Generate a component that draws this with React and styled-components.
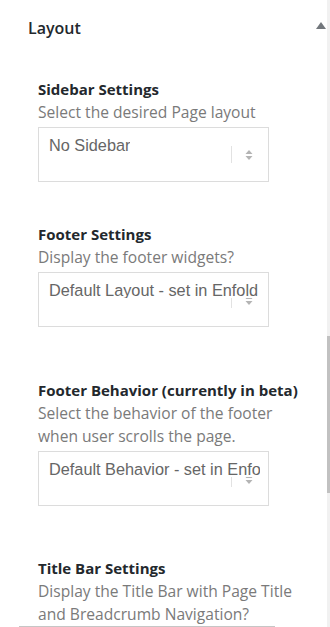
import React from "react";
import styled, { createGlobalStyle } from "styled-components";

const GlobalStyle = createGlobalStyle`
  html, body {
    margin: 0;
    padding: 0;
    background: #fff;
  }
  body {
    font-family: "Open Sans", "Noto Sans", sans-serif;
    color: #23282d;
  }
`;

const Page = styled.div`
  display: flex;
  width: 330px;
  height: 627px;
  overflow: hidden;
  position: relative;
`;

const Main = styled.div`
  flex: 1;
  min-width: 0;
  overflow: hidden;
`;

const Header = styled.div`
  display: flex;
  align-items: center;
  justify-content: space-between;
  padding: 16px 1px 0 28px;
`;

const Title = styled.h2`
  margin: 0;
  font-size: 16px;
  font-weight: 600;
  line-height: 24px;
  color: #23282d;
`;

const Toggle = styled.span`
  width: 0;
  height: 0;
  margin-top: -5px;
  border-left: 5px solid transparent;
  border-right: 5px solid transparent;
  border-bottom: 7px solid #72777c;
`;

const Fields = styled.div`
  display: flex;
  flex-direction: column;
  padding: 0 22px 0 38px;
`;

const Field = styled.div`
  margin-top: ${(p) => p.$space}px;
`;

const Label = styled.div`
  font-size: 15px;
  font-weight: 700;
  line-height: 23px;
  white-space: nowrap;
  color: #23282d;
`;

const Description = styled.div`
  font-size: 15.6px;
  line-height: 23px;
  color: #7a7a7a;
`;

const Select = styled.div`
  position: relative;
  box-sizing: border-box;
  width: 231px;
  height: 55px;
  margin-top: 3px;
  border: 1px solid #dcdcdc;
  background: #fff;
`;

const Value = styled.div`
  position: relative;
  z-index: 1;
  box-sizing: border-box;
  display: inline-block;
  max-width: calc(100% - 18px);
  height: 25px;
  margin-left: 10px;
  padding-top: 9px;
  font-family: "Liberation Sans", Arial, sans-serif;
  font-size: 16.3px;
  line-height: 16px;
  color: #666;
  background: #fff;
  white-space: nowrap;
  overflow: hidden;
  vertical-align: top;
`;

const Indicator = styled.div`
  position: absolute;
  top: 18px;
  right: 15px;
  display: flex;
  align-items: center;
  gap: 13px;
  height: 17px;
`;

const Divider = styled.span`
  width: 1px;
  height: 17px;
  background: #e2e2e2;
`;

const Arrows = styled.svg`
  display: block;
`;

const VTrack = styled.div`
  width: 3px;
  height: 100%;
  display: flex;
  flex-direction: column;
  background: #f1f1f1;
`;

const VThumb = styled.div`
  margin-top: 336px;
  height: 157px;
  background: #c1c1c1;
`;

const HThumb = styled.div`
  position: absolute;
  left: 19px;
  bottom: 0;
  width: 256px;
  height: 1px;
  background: #c6c6c6;
`;

const SelectBox = ({ value }) => (
  <Select>
    <Value>{value}</Value>
    <Indicator>
      <Divider />
      <Arrows width="8" height="12" viewBox="0 0 8 12">
        <path d="M4 1 L7.5 5 H0.5 Z" fill="#b4b4b4" />
        <path d="M4 11 L7.5 7 H0.5 Z" fill="#b4b4b4" />
      </Arrows>
    </Indicator>
  </Select>
);

const fields = [
  {
    space: 38,
    label: "Sidebar Settings",
    desc: "Select the desired Page layout",
    value: "No Sidebar",
  },
  {
    space: 41,
    label: "Footer Settings",
    desc: "Display the footer widgets?",
    value: "Default Layout - set in Enfold",
  },
  {
    space: 52,
    label: "Footer Behavior (currently in beta)",
    desc: "Select the behavior of the footer when user scrolls the page.",
    value: "Default Behavior - set in Enfold",
  },
  {
    space: 51,
    label: "Title Bar Settings",
    desc: "Display the Title Bar with Page Title and Breadcrumb Navigation?",
  },
];

const App = () => {
  return (
    <>
      <GlobalStyle />
      <Page>
        <Main>
          <Header>
            <Title>Layout</Title>
            <Toggle />
          </Header>
          <Fields>
            {fields.map((f) => (
              <Field key={f.label} $space={f.space}>
                <Label>{f.label}</Label>
                <Description>{f.desc}</Description>
                {f.value && <SelectBox value={f.value} />}
              </Field>
            ))}
          </Fields>
        </Main>
        <VTrack>
          <VThumb />
        </VTrack>
        <HThumb />
      </Page>
    </>
  );
};

export default App;
